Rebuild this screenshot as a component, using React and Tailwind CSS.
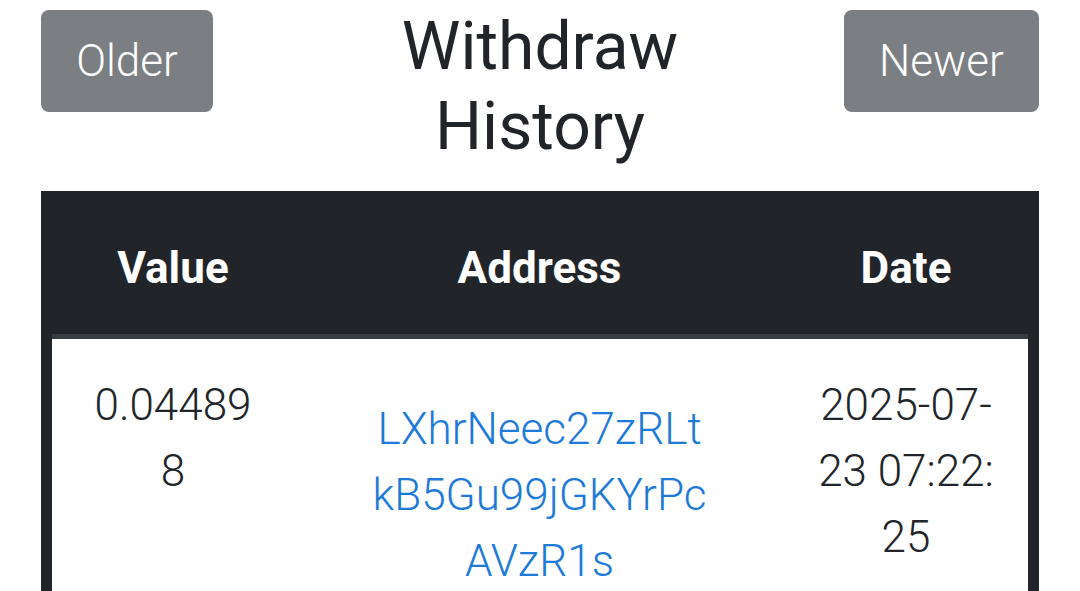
export default function App() {
    const font = { fontFamily: "Roboto, 'Liberation Sans', sans-serif" }
    return (
        <div className="min-h-[591px] bg-white px-[41px] pt-[10px] text-[#212529]" style={font}>
            <div className="grid grid-cols-[1fr_auto_1fr] items-start">
                <div>
                    <button className="h-[102px] w-[172px] rounded-[8px] bg-[#7b7f84] text-[44px] font-light text-white">Older</button>
                </div>
                <h2 className="mt-[-3px] text-center text-[66px] font-normal leading-[80px]">Withdraw<br />History</h2>
                <div className="flex justify-end">
                    <button className="h-[102px] w-[195px] rounded-[8px] bg-[#7b7f84] text-[44px] font-light text-white">Newer</button>
                </div>
            </div>
            <div className="mt-[24px] bg-[#212529] px-[11px]">
                <div className="grid h-[148px] grid-cols-[242px_491px_242px] items-center border-b-[5px] border-[#383c40] pt-[10px] text-center text-[44px] font-bold text-white">
                    <div>Value</div>
                    <div>Address</div>
                    <div>Date</div>
                </div>
                <div className="grid grid-cols-[242px_491px_242px] bg-white pt-[33px] pb-[20px] text-center text-[44px] font-light leading-[66px]">
                    <div>0.04489<br />8</div>
                    <div className="pt-[24px]">
                        <a href="#" className="text-[#1d7ad9]">LXhrNeec27zRLt<br />kB5Gu99jGKYrPc<br />AVzR1s</a>
                    </div>
                    <div>2025-07-<br />23 07:22:<br />25</div>
                </div>
            </div>
        </div>
    )
}
